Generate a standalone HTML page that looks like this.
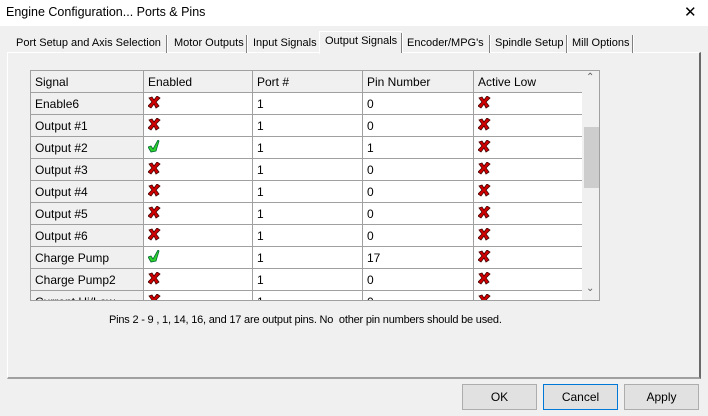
<!DOCTYPE html>
<html><head><style>
body{margin:0;width:708px;height:416px;background:#f0f0f0;font-family:"Liberation Sans",sans-serif;font-size:12px;color:#000;position:relative;overflow:hidden}
.a{position:absolute}
.title{left:0;top:0;width:708px;height:26px;background:#fff}
.tab{top:34px;height:19px;line-height:19px;font-size:11px;white-space:nowrap}
.sep{top:35px;width:1px;height:18px;background:#808080;border-right:1px solid #fff}
.grid{left:30px;top:70px;width:570px;height:231px;border:1px solid #a0a0a0;background:#fff;overflow:hidden;box-sizing:border-box}
table{border-collapse:collapse;position:absolute;left:0;top:0;font-size:12px}
td{height:21px;border-right:1px solid #a0a0a0;border-bottom:1px solid #a0a0a0;padding:0 4px;vertical-align:middle;white-space:nowrap}
td:first-child{background:#f0f0f0}
tr.h td{background:#f0f0f0}
.btn{top:384px;height:26px;border:1px solid #adadad;background:#e1e1e1;text-align:center;line-height:25px;box-sizing:border-box}
</style></head><body>
<div class="a title"></div>
<div class="a" style="left:6px;top:5px;font-size:12.5px">Engine Configuration... Ports &amp; Pins</div>
<div class="a" style="left:684px;top:3px;font-size:15px;font-weight:normal">✕</div>
<div class="a" style="left:7px;top:52px;width:694px;height:327px;border:1px solid #fff;border-right:2px solid #696969;border-bottom:2px solid #a0a0a0;box-sizing:border-box"></div>
<div class="a tab" style="left:16px;width:151px">Port Setup and Axis Selection</div>
<div class="a sep" style="left:166px"></div>
<div class="a tab" style="left:174px">Motor Outputs</div>
<div class="a sep" style="left:246px"></div>
<div class="a tab" style="left:253px">Input Signals</div>
<div class="a" style="left:319px;top:31px;width:82px;height:22px;background:#f0f0f0;border-top:1px solid #fff;border-left:1px solid #fff"></div>
<div class="a tab" style="left:325px;top:32px">Output Signals</div>
<div class="a sep" style="left:401px;top:33px;height:20px"></div>
<div class="a tab" style="left:407px">Encoder/MPG's</div>
<div class="a sep" style="left:489px"></div>
<div class="a tab" style="left:495px">Spindle Setup</div>
<div class="a sep" style="left:566px"></div>
<div class="a tab" style="left:572px">Mill Options</div>
<div class="a sep" style="left:632px"></div>
<svg width="0" height="0" style="position:absolute"><defs>
<g id="x"><path d="M1 2 L4 1 L6 4 L9 0 L12 2 L8 6 L11 10 L8 12 L6 8 L3 12 L0 10 L4 6 Z" fill="#d40000" stroke="#400" stroke-width="0.8"/></g>
<g id="c"><path d="M0 7 L3 6 L5 9 L10 0 L11 1 L8 11 L3 12 Z" fill="#2ed12e" stroke="#063" stroke-width="0.8"/></g>
</defs></svg>
<div class="a grid">
<table>
<tr class="h"><td style="width:104px">Signal</td><td style="width:100px">Enabled</td><td style="width:101px">Port #</td><td style="width:102px">Pin Number</td><td style="width:100px">Active Low</td></tr>
<tr><td>Enable6</td><td><svg width="13" height="13"><use href="#x"/></svg></td><td>1</td><td>0</td><td><svg width="13" height="13"><use href="#x"/></svg></td></tr>
<tr><td>Output #1</td><td><svg width="13" height="13"><use href="#x"/></svg></td><td>1</td><td>0</td><td><svg width="13" height="13"><use href="#x"/></svg></td></tr>
<tr><td>Output #2</td><td><svg width="13" height="13"><use href="#c"/></svg></td><td>1</td><td>1</td><td><svg width="13" height="13"><use href="#x"/></svg></td></tr>
<tr><td>Output #3</td><td><svg width="13" height="13"><use href="#x"/></svg></td><td>1</td><td>0</td><td><svg width="13" height="13"><use href="#x"/></svg></td></tr>
<tr><td>Output #4</td><td><svg width="13" height="13"><use href="#x"/></svg></td><td>1</td><td>0</td><td><svg width="13" height="13"><use href="#x"/></svg></td></tr>
<tr><td>Output #5</td><td><svg width="13" height="13"><use href="#x"/></svg></td><td>1</td><td>0</td><td><svg width="13" height="13"><use href="#x"/></svg></td></tr>
<tr><td>Output #6</td><td><svg width="13" height="13"><use href="#x"/></svg></td><td>1</td><td>0</td><td><svg width="13" height="13"><use href="#x"/></svg></td></tr>
<tr><td>Charge Pump</td><td><svg width="13" height="13"><use href="#c"/></svg></td><td>1</td><td>17</td><td><svg width="13" height="13"><use href="#x"/></svg></td></tr>
<tr><td>Charge Pump2</td><td><svg width="13" height="13"><use href="#x"/></svg></td><td>1</td><td>0</td><td><svg width="13" height="13"><use href="#x"/></svg></td></tr>
<tr><td>Current Hi/Low</td><td><svg width="13" height="13"><use href="#x"/></svg></td><td>1</td><td>0</td><td><svg width="13" height="13"><use href="#x"/></svg></td></tr>
</table>
<div class="a" style="left:551px;top:0;width:18px;height:229px;background:#f0f0f0"></div>
<div class="a" style="left:553px;top:56px;width:15px;height:61px;background:#cdcdcd"></div>
<div class="a" style="left:555px;top:1px;font-size:10px;color:#606060">&#8963;</div>
<div class="a" style="left:555px;top:212px;font-size:10px;color:#606060">&#8964;</div>
</div>
<div class="a" style="left:109px;top:314px;font-size:11px;letter-spacing:-0.2px">Pins 2 - 9 , 1, 14, 16, and 17 are output pins. No&nbsp; other pin numbers should be used.</div>
<div class="a btn" style="left:462px;width:75px">OK</div>
<div class="a btn" style="left:543px;width:75px;border:1px solid #0078d7">Cancel</div>
<div class="a btn" style="left:624px;width:75px">Apply</div>
</body></html>
